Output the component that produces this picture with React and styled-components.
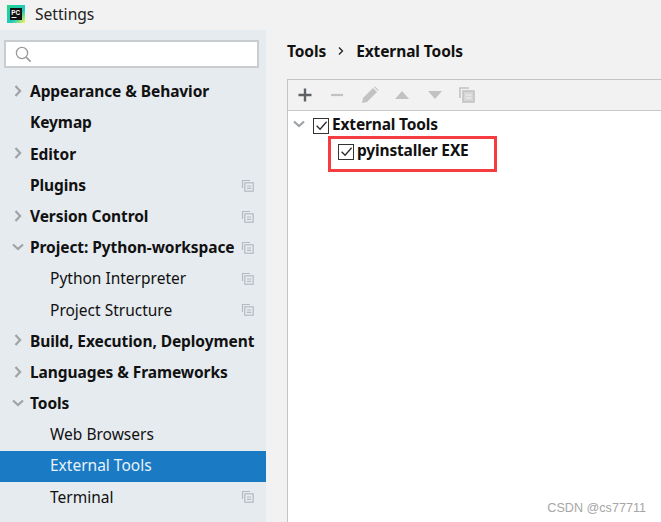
import React from 'react';
import styled, { createGlobalStyle } from 'styled-components';

const GlobalStyle = createGlobalStyle`
  html, body {
    margin: 0;
    padding: 0;
    background: #f2f2f2;
  }
  body {
    font-family: "Noto Sans", "Open Sans", "Liberation Sans", sans-serif;
    color: #111;
  }
`;

const Window = styled.div`
  width: 661px;
  height: 522px;
  display: flex;
  flex-direction: column;
  overflow: hidden;
  position: relative;
`;

const TitleBar = styled.div`
  height: 30px;
  flex: none;
  box-sizing: border-box;
  padding: 0 0 3px 7px;
  display: flex;
  align-items: center;
  gap: 10px;
  font-size: 15.6px;
  color: #222;
`;

const Body = styled.div`
  flex: 1;
  display: flex;
  min-height: 0;
`;

const Sidebar = styled.aside`
  width: 266px;
  flex: none;
  background: #e6ebf0;
  padding-top: 10px;
  box-sizing: border-box;
`;

const Search = styled.div`
  height: 28px;
  margin: 0 7px 0 4px;
  box-sizing: border-box;
  border: 2px solid #c9cdd0;
  background: #fff;
  display: flex;
  align-items: center;
  padding-left: 9px;
`;

const Tree = styled.div`
  margin-top: 8.4px;
`;

const Row = styled.div`
  height: 31.2px;
  box-sizing: border-box;
  padding-bottom: 1.5px;
  display: flex;
  align-items: center;
  position: relative;
  padding-left: ${p => (p.$child ? 50 : 30)}px;
  font-size: 15.5px;
  font-weight: ${p => (p.$child ? 400 : 700)};
  letter-spacing: ${p => (p.$child ? 0 : -0.08)}px;
  background: ${p => (p.$selected ? '#1a7ac4' : 'transparent')};
  color: ${p => (p.$selected ? '#e8f2fa' : '#111')};
`;

const Arrow = styled.span`
  position: absolute;
  left: 11px;
  top: 50%;
  margin-top: -8px;
  width: 14px;
  height: 14px;
  display: flex;
`;

const Badge = styled.span`
  position: absolute;
  left: 241px;
  top: 50%;
  margin-top: -7px;
  width: 13px;
  height: 13px;
  display: flex;
`;

const Main = styled.main`
  flex: 1;
  min-width: 0;
  padding-left: 21px;
  display: flex;
  flex-direction: column;
`;

const Breadcrumb = styled.div`
  height: 49px;
  flex: none;
  display: flex;
  align-items: center;
  gap: 11px;
  font-size: 15.5px;
  font-weight: 700;
  letter-spacing: -0.1px;
  box-sizing: border-box;
  padding-bottom: 7px;
`;

const Panel = styled.div`
  flex: 1;
  display: flex;
  flex-direction: column;
  border-top: 1px solid #c4c4c4;
  border-left: 1px solid #c4c4c4;
`;

const Toolbar = styled.div`
  height: 30px;
  flex: none;
  display: flex;
  align-items: center;
  gap: 10.4px;
  padding-left: 6px;
  border-bottom: 1px solid #c9c9c9;
`;

const ToolIcon = styled.span`
  width: 22px;
  height: 22px;
  display: flex;
  align-items: center;
  justify-content: center;
`;

const List = styled.div`
  flex: 1;
  background: #fff;
`;

const ListRow = styled.div`
  height: 26px;
  display: flex;
  align-items: center;
  gap: 3px;
  padding-left: ${p => (p.$child ? 50 : 25)}px;
  position: relative;
  font-size: 15.5px;
  font-weight: 700;
  letter-spacing: -0.16px;
`;

const Check = styled.span`
  width: 14px;
  height: 14px;
  margin-top: 3px;
  border: 1px solid #333;
  background: #fff;
  flex: none;
  display: flex;
  align-items: center;
  justify-content: center;
`;

const ListArrow = styled.span`
  position: absolute;
  left: 4px;
  top: 6px;
  width: 14px;
  height: 14px;
  display: flex;
`;

const Highlight = styled.div`
  position: absolute;
  left: 328px;
  top: 136px;
  width: 169px;
  height: 36px;
  box-sizing: border-box;
  border: 3px solid #f53c40;
`;

const Watermark = styled.div`
  position: absolute;
  right: 15px;
  bottom: 7px;
  font-family: "Liberation Sans", sans-serif;
  font-size: 12.6px;
  color: #a6a6a6;
`;

const Logo = () => (
  <svg width="18" height="18" viewBox="0 0 18 18">
    <defs>
      <linearGradient id="pc" x1="0" y1="0" x2="1" y2="1">
        <stop offset="0" stopColor="#21d789" />
        <stop offset="0.6" stopColor="#21c7c0" />
        <stop offset="1" stopColor="#fcf84a" />
      </linearGradient>
    </defs>
    <rect width="18" height="18" fill="url(#pc)" />
    <rect x="3" y="3" width="12" height="12" fill="#111" />
    <rect x="4.5" y="12" width="5" height="1" fill="#eee" />
    <text x="4.2" y="9.6" fontSize="6.4" fontWeight="700" fill="#fff" fontFamily="Liberation Sans">PC</text>
  </svg>
);

const SearchIcon = () => (
  <svg width="17" height="17" viewBox="0 0 17 17" fill="none" stroke="#9a9a9a" strokeWidth="1.3">
    <circle cx="7" cy="7" r="5.6" />
    <path d="M11 11l4.6 4.6" strokeWidth="1.7" />
  </svg>
);

const Chevron = ({ open }) => (
  <svg width="14" height="14" viewBox="0 0 14 14" fill="none" stroke="#a0a3a6" strokeWidth="2.2">
    {open ? <path d="M2 4.5l5 4.6 5-4.6" /> : <path d="M4.5 2l4.6 5-4.6 5" />}
  </svg>
);

const ProjectBadge = () => (
  <svg width="13" height="13" viewBox="0 0 13 13" fill="none" stroke="#b3bac0" strokeWidth="1.2">
    <path d="M9 1.5H1.5V9" />
    <rect x="3.8" y="3.8" width="8.4" height="8.4" fill="#e6ebf0" />
    <path d="M6 7h4.2M6 9.4h4.2" />
  </svg>
);

const Tick = () => (
  <svg width="13" height="13" viewBox="0 0 12 12" fill="none" stroke="#2b2b2b" strokeWidth="1.2">
    <path d="M1.5 6.2l3.2 3.3 6-7" />
  </svg>
);

const items = [
  { label: 'Appearance & Behavior', arrow: 'closed' },
  { label: 'Keymap' },
  { label: 'Editor', arrow: 'closed' },
  { label: 'Plugins', badge: true },
  { label: 'Version Control', arrow: 'closed', badge: true },
  { label: 'Project: Python-workspace', arrow: 'open', badge: true },
  { label: 'Python Interpreter', child: true, badge: true },
  { label: 'Project Structure', child: true, badge: true },
  { label: 'Build, Execution, Deployment', arrow: 'closed' },
  { label: 'Languages & Frameworks', arrow: 'closed' },
  { label: 'Tools', arrow: 'open' },
  { label: 'Web Browsers', child: true },
  { label: 'External Tools', child: true, selected: true },
  { label: 'Terminal', child: true, badge: true }
];

const App = () => (
  <Window>
    <GlobalStyle />
    <TitleBar>
      <Logo />
      Settings
    </TitleBar>
    <Body>
      <Sidebar>
        <Search>
          <SearchIcon />
        </Search>
        <Tree>
          {items.map(item => (
            <Row key={item.label} $child={item.child} $selected={item.selected}>
              {item.arrow && (
                <Arrow>
                  <Chevron open={item.arrow === 'open'} />
                </Arrow>
              )}
              {item.label}
              {item.badge && (
                <Badge>
                  <ProjectBadge />
                </Badge>
              )}
            </Row>
          ))}
        </Tree>
      </Sidebar>
      <Main>
        <Breadcrumb>
          Tools
          <svg width="8" height="10" viewBox="0 0 8 10" fill="none" stroke="#222" strokeWidth="1.3">
            <path d="M2 1.5L5.5 5 2 8.5" />
          </svg>
          External Tools
        </Breadcrumb>
        <Panel>
          <Toolbar>
            <ToolIcon>
              <svg width="14" height="14" viewBox="0 0 14 14" stroke="#5f6265" strokeWidth="2.4">
                <path d="M7 0.5v13M0.5 7h13" />
              </svg>
            </ToolIcon>
            <ToolIcon>
              <svg width="14" height="14" viewBox="0 0 14 14" stroke="#c2c2c2" strokeWidth="2.2">
                <path d="M1 7h12" />
              </svg>
            </ToolIcon>
            <ToolIcon>
              <svg width="18" height="18" viewBox="0 0 18 18" fill="#c2c2c2">
                <path d="M1 17l1-5L12 2l4 4L6 16z" />
                <path d="M13 1l1-.5 3.5 3.5-.5 1z" />
              </svg>
            </ToolIcon>
            <ToolIcon>
              <svg width="16" height="10" viewBox="0 0 16 10" fill="#c2c2c2">
                <path d="M8 1l7 8H1z" />
              </svg>
            </ToolIcon>
            <ToolIcon>
              <svg width="16" height="10" viewBox="0 0 16 10" fill="#c2c2c2">
                <path d="M8 9L1 1h14z" />
              </svg>
            </ToolIcon>
            <ToolIcon>
              <svg width="16" height="16" viewBox="0 0 16 16" fill="none" stroke="#c2c2c2" strokeWidth="1.6">
                <path d="M10 1H1v10" />
                <rect x="4" y="4" width="11" height="11" fill="#d6d6d6" />
                <path d="M6.5 8h6M6.5 11h6" stroke="#f2f2f2" strokeWidth="1.2" />
              </svg>
            </ToolIcon>
          </Toolbar>
          <List>
            <ListRow>
              <ListArrow>
                <Chevron open />
              </ListArrow>
              <Check>
                <Tick />
              </Check>
              External Tools
            </ListRow>
            <ListRow $child>
              <Check>
                <Tick />
              </Check>
              pyinstaller EXE
            </ListRow>
          </List>
        </Panel>
      </Main>
    </Body>
    <Highlight />
    <Watermark>CSDN @cs77711</Watermark>
  </Window>
);

export default App;
